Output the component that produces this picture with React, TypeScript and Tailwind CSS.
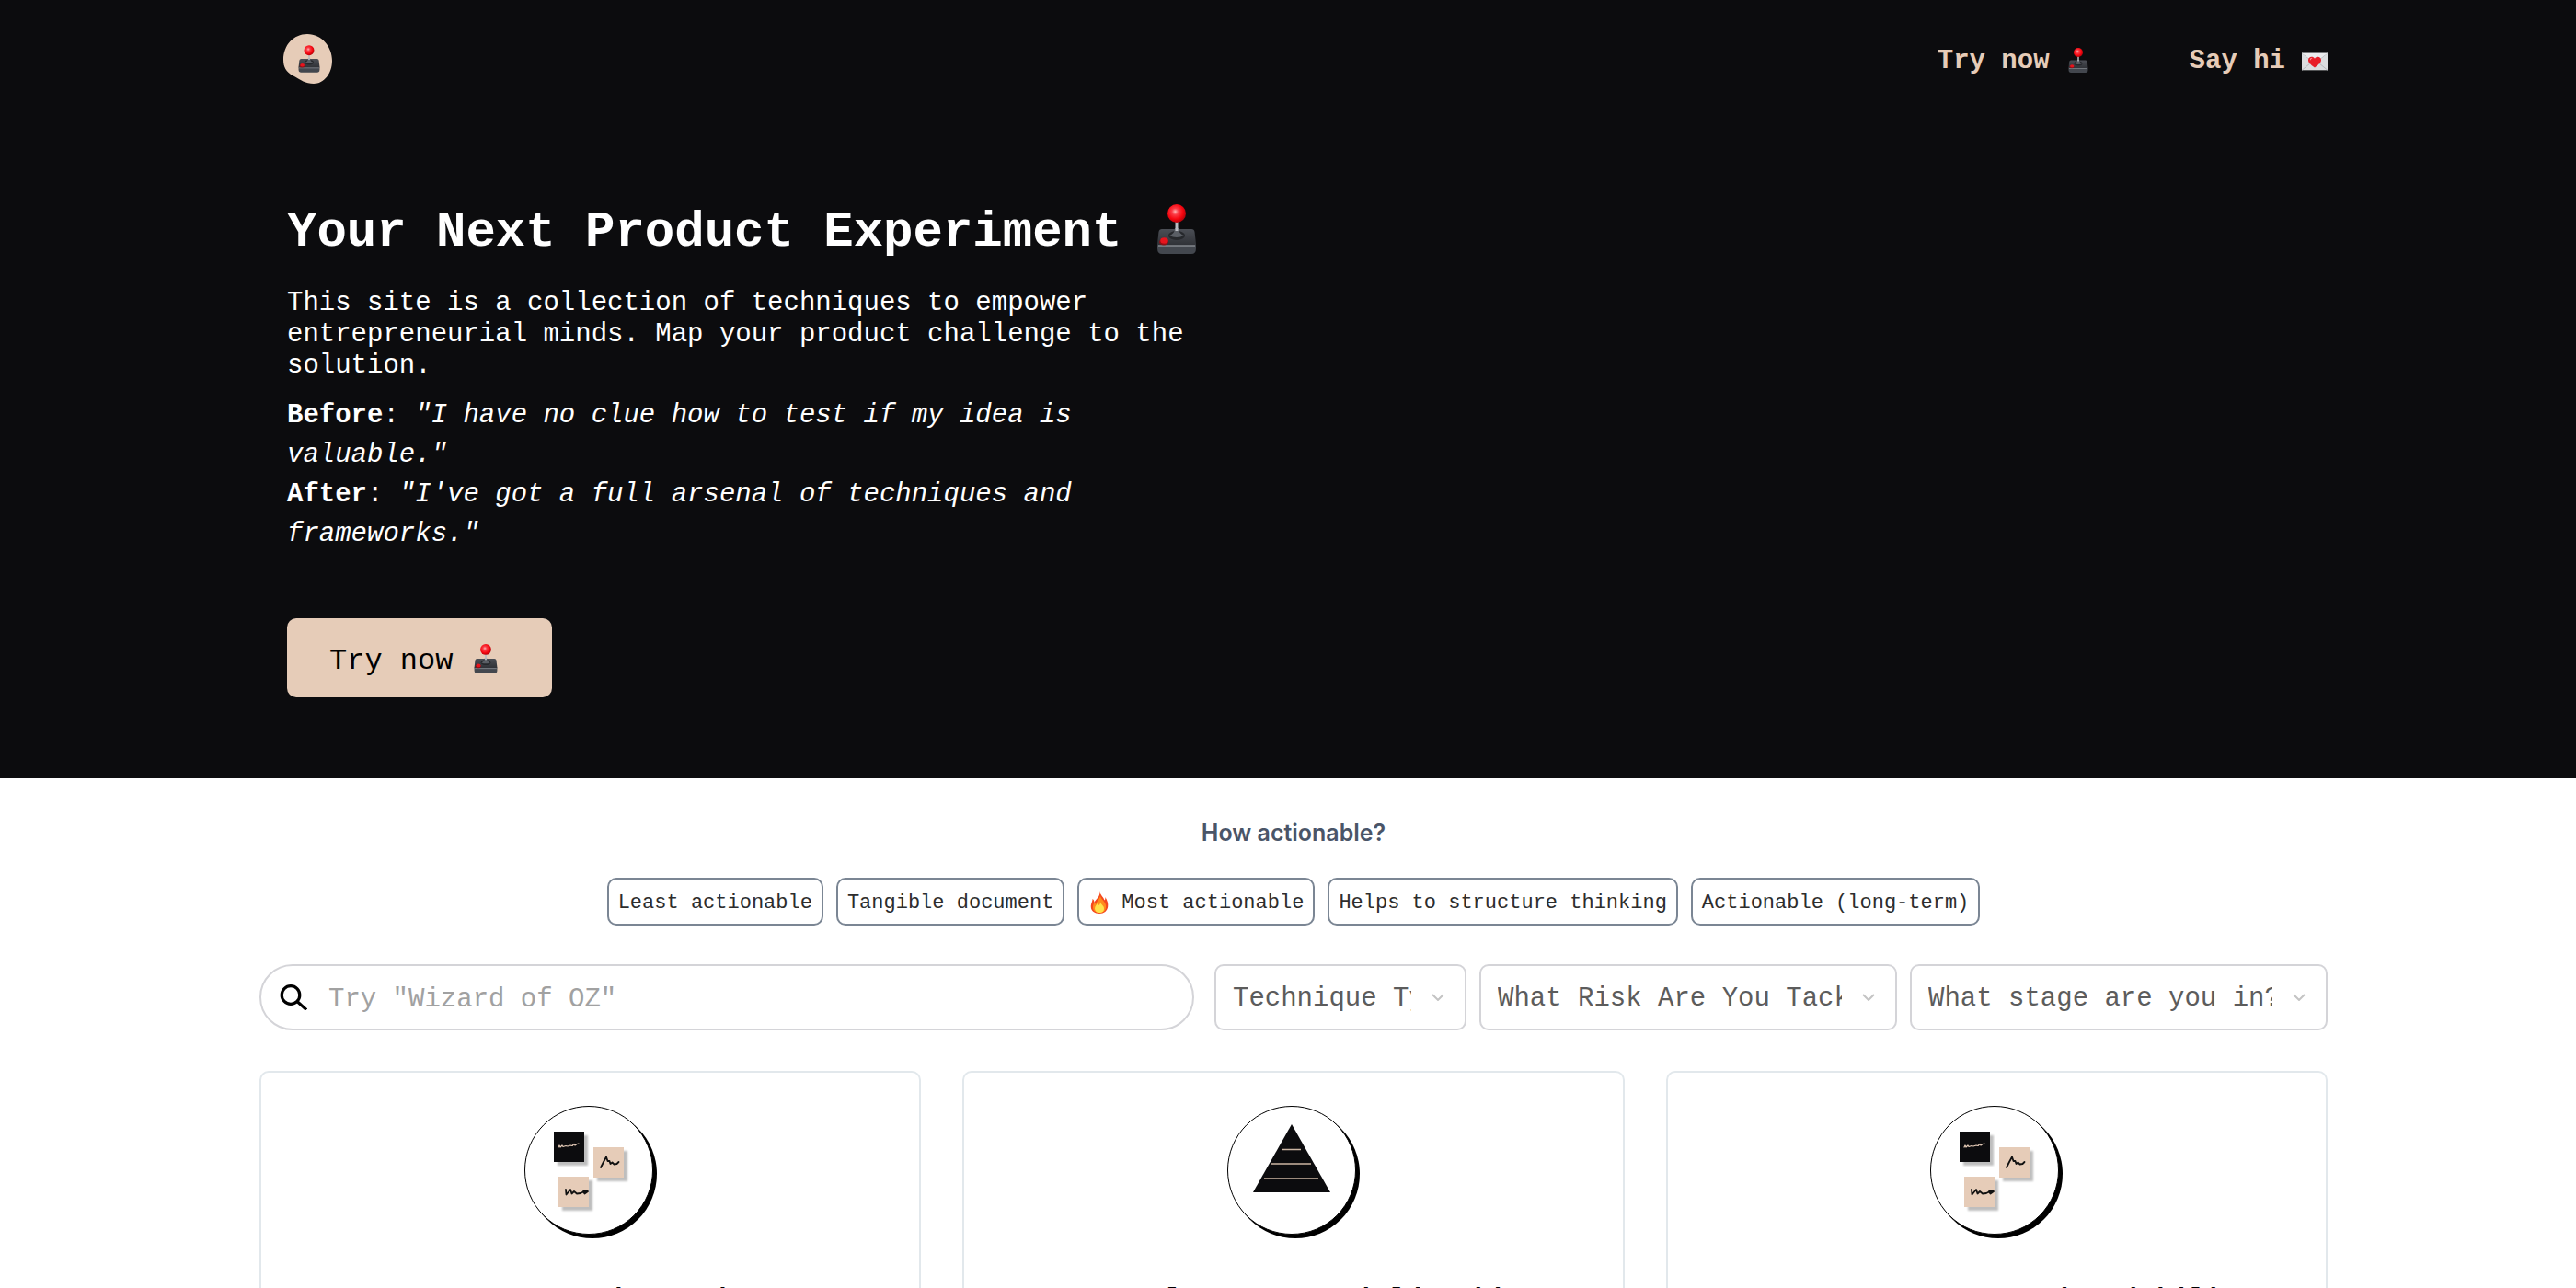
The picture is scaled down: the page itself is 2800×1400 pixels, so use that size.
import React from 'react';
import { clsx } from 'clsx';

const TAGS = [
  { label: 'Least actionable' },
  { label: 'Tangible document' },
  { label: 'Most actionable', hot: true },
  { label: 'Helps to structure thinking' },
  { label: 'Actionable (long-term)' },
];

const FILTERS = [
  { id: 'technique', label: 'Technique Type', width: 'w-[274px]' },
  { id: 'risk', label: 'What Risk Are You Tackling?', width: 'w-[454px]' },
  { id: 'stage', label: 'What stage are you in?', width: 'w-[454px]' },
];

const CARDS = [
  { title: 'Momentum Idea Bank', art: 'notes' },
  { title: 'Unusual Ventures Field Guide', art: 'pyramid' },
  { title: 'How Ventures Prove The Viability', art: 'notes' },
];

function Joystick({ className }: { className?: string }) {
  return (
    <svg viewBox="0 0 44 54" className={className} aria-hidden="true">
      <defs>
        <radialGradient id="ball" cx="0.42" cy="0.4" r="0.6">
          <stop offset="0" stopColor="#ffb3b3" />
          <stop offset="0.3" stopColor="#fb3a44" />
          <stop offset="0.7" stopColor="#f5060f" />
          <stop offset="1" stopColor="#b8020a" />
        </radialGradient>
        <linearGradient id="plate" x1="0" y1="0" x2="0" y2="1">
          <stop offset="0" stopColor="#4b4e55" />
          <stop offset="1" stopColor="#2f3136" />
        </linearGradient>
      </defs>
      <path d="M1 43h42v5q0 6-5 6H6q-5 0-5-6z" fill="#43474e" />
      <path d="M6 27h32q3 0 3.500 3L43 43q0 2-2 2H3q-2 0-2-2l1.500-13Q3 27 6 27z" fill="url(#plate)" />
      <path d="M2 45h40" stroke="#84888f" strokeWidth="1.500" />
      <ellipse cx="22" cy="34" rx="9" ry="5" fill="#26282c" />
      <path d="M14 34q6-2 6-8h4q0 6 6 8-8 4-16 0z" fill="#5a5e65" />
      <path d="M22 17v12" stroke="#b9bcc2" strokeWidth="3" />
      <ellipse cx="8" cy="41" rx="5" ry="3.500" fill="#8e1016" />
      <ellipse cx="8.500" cy="39.500" rx="4.200" ry="3.200" fill="#e8141d" />
      <circle cx="22" cy="10" r="10" fill="url(#ball)" />
    </svg>
  );
}

function LoveLetter({ className }: { className?: string }) {
  return (
    <svg viewBox="0 0 30 20" className={className} aria-hidden="true">
      <rect width="30" height="20" fill="#dcdddf" />
      <path d="M0 20l11-9M30 20l-11-9M0 0l15 12L30 0" fill="none" stroke="#b4b6ba" strokeWidth="1" />
      <path d="M0 0h30L15 11z" fill="#ececee" />
      <path d="M15 17C10 13 7.500 11 7.500 8c0-4 5.500-5 7.500-1.500C17 3 22.500 4 22.500 8c0 3-2.500 5-7.500 9z" fill="#e81e28" />
      <path d="M10 8q0-2 2-2" fill="none" stroke="#ff8288" strokeWidth="1.200" />
    </svg>
  );
}

function Fire({ className }: { className?: string }) {
  return (
    <svg viewBox="0 0 20 24" className={className} aria-hidden="true">
      <path
        d="M10.500 0c.5 4 4 6 5 9.500 1-1 1-2 .8-3.500 2.500 4 3.400 7 2.900 10.500-.6 4.500-4 7.500-9.200 7.500S1 21 .8 17C.6 13 2.500 11.500 2.500 8c1.500 1 2 2.500 2 4C6 8 11 6 10.500 0z"
        fill="#f4481e"
      />
      <path d="M11 4c0 4 5 6 6 11 .7 5-2 8-7 8s-7.500-3-7-7c.3-2 1-3 1.500-4l2 2c0-4 4-5 4.500-10z" fill="#ff8a1c" />
      <path d="M11 11c0 3 4 4 4 7.500S13 23 10 23s-5-2-5-4.500S7 15 7.500 13l2 2c1-1 1.500-2 1.500-4z" fill="#ffe14a" />
    </svg>
  );
}

function Logo() {
  return (
    <a href="#" aria-label="Home" className="relative block h-[54px] w-[54px]">
      <svg viewBox="0 0 54 54" className="h-full w-full" aria-hidden="true">
        <path d="M26 0c16 0 27 14 27 29 0 14-9 25-20 25-9 0-14-4-23-9C3 41 0 36 0 28 0 12 11 0 26 0z" fill="#e6ccb8" />
      </svg>
      <Joystick className="absolute left-4 top-3 h-[30px] w-6" />
    </a>
  );
}

function Disc({ children }: { children: React.ReactNode }) {
  return (
    <svg viewBox="0 0 144 144" className="h-36 w-36" aria-hidden="true">
      <circle cx="74" cy="74" r="70" fill="#000" />
      <circle cx="70" cy="70" r="69.500" fill="#fff" stroke="#000" />
      {children}
    </svg>
  );
}

function NotesArt() {
  return (
    <Disc>
      <defs>
        <filter id="soft" x="-20%" y="-20%" width="150%" height="150%">
          <feGaussianBlur stdDeviation="1.200" />
        </filter>
      </defs>
      <g fill="#000" opacity="0.25" filter="url(#soft)">
        <rect x="36" y="32" width="33" height="33" />
        <rect x="79" y="49" width="33" height="33" />
        <rect x="41" y="81" width="33" height="33" />
      </g>
      <rect x="32" y="28" width="33" height="33" fill="#0c0c0e" />
      <rect x="75" y="45" width="33" height="33" fill="#e6ccb8" />
      <rect x="37" y="77" width="33" height="33" fill="#e6ccb8" />
      <g fill="none" strokeLinecap="round" strokeLinejoin="round">
        <path d="M37 45l1-2 1 2 2-2 1 1.500 3-1 2 .5 3-1 2 .5 2-2 1 1.500 2-1.500 2-.5" stroke="#e6ccb8" strokeWidth="1.200" />
        <path d="M83 67l3-6 3-5.500 1.500 4.500 2 0 1 3 2-1.500 2 2 3-.5 2-2" stroke="#111" strokeWidth="1.800" />
        <path d="M45 91l.5 5.500L50 91l1.500 4.500L54 93l3 2.500 4-.5 3-1.500 1.500 2L69 93l-5 0" stroke="#111" strokeWidth="1.800" />
      </g>
    </Disc>
  );
}

function PyramidArt() {
  return (
    <Disc>
      <path d="M70 20l42 74H28z" fill="#0c0c0e" />
      <path d="M59 47.500h21M48 63h43M40 79h59" stroke="#cbb5a3" strokeWidth="1.500" />
    </Disc>
  );
}

export default function App() {
  return (
    <div className="h-screen overflow-hidden bg-white font-['Liberation_Mono',monospace]">
      <div className="bg-[#0c0c0e] pb-[88px] pl-[312px] pr-[270px] text-white">
        <header className="-ml-1 flex items-center justify-between pt-[37px]">
          <Logo />
          <nav className="mt-1.5 flex items-center gap-[110px] text-[29px] font-bold leading-[34px] text-[#e6ccb8]">
            <a href="#try" className="flex items-center gap-[20px]">
              Try now
              <Joystick className="mb-1 h-[29px] w-[22px]" />
            </a>
            <a href="#hi" className="flex items-center gap-[18px]">
              Say hi
              <LoveLetter className="h-5 w-7" />
            </a>
          </nav>
        </header>

        <section className="max-w-[1000px] pt-[131px]">
          <h1 className="flex items-center gap-[38px] text-[54px] font-bold leading-[62px]">
            Your Next Product Experiment
            <Joystick className="mb-2 h-[54px] w-11" />
          </h1>
          <p className="mt-[29px] text-[29px] leading-[34px]">
            This site is a collection of techniques to empower entrepreneurial minds. Map your product challenge to the
            solution.
          </p>
          <div className="mt-[15px] max-w-[900px] text-[29px] leading-[43px]">
            <p>
              <b>Before</b>: <i>"I have no clue how to test if my idea is valuable."</i>
            </p>
            <p>
              <b>After</b>: <i>"I've got a full arsenal of techniques and frameworks."</i>
            </p>
          </div>
          <button
            type="button"
            className="mt-[70px] flex h-[86px] w-72 items-center gap-[23px] rounded-[10px] bg-[#e6ccb8] pl-[46px] pt-2 text-[32px] text-black"
          >
            Try now
            <Joystick className="mb-1.5 h-8 w-[26px]" />
          </button>
        </section>
      </div>

      <main className="pl-[282px] pr-[270px] pt-11">
        <h2 className="text-center font-['Inter',sans-serif] text-[25px] font-semibold leading-[30px] text-[#4a5568]">
          How actionable?
        </h2>

        <div className="mt-[34px] flex justify-center gap-[14px]">
          {TAGS.map((tag) => (
            <button
              key={tag.label}
              type="button"
              className="flex h-[52px] items-center gap-[14px] rounded-[10px] border-2 border-[#7b8694] px-[10px] pt-0.5 text-[22px] text-[#2d2d2d]"
            >
              {tag.hot && <Fire className="ml-0.5 h-6 w-5" />}
              {tag.label}
            </button>
          ))}
        </div>

        <div className="mt-[42px] flex gap-[14px]">
          <label className="mr-2 flex h-[72px] min-w-0 flex-1 items-center gap-[23px] rounded-full border-2 border-[#d4d4d8] pl-5">
            <svg viewBox="0 0 30 28" className="h-7 w-[30px]" fill="none" stroke="#000" strokeWidth="3.200" aria-hidden="true">
              <circle cx="12" cy="11.500" r="9.800" />
              <path d="M19 18.500l10 9" />
            </svg>
            <input
              type="text"
              aria-label="Search techniques"
              placeholder={'Try "Wizard of OZ"'}
              className="min-w-0 flex-1 bg-transparent pt-1.5 text-[29px] outline-none placeholder:text-[#a1a1a1]"
            />
          </label>
          {FILTERS.map((filter) => (
            <div key={filter.id} className={clsx('relative shrink-0', filter.width)}>
              <select
                aria-label={filter.label}
                className="h-[72px] w-full appearance-none rounded-[10px] border-2 border-[#d4d4d8] bg-white pl-[18px] pr-[58px] pt-1 text-[29px] text-[#5c5c5c]"
              >
                <option>{filter.label}</option>
              </select>
              <svg
                viewBox="0 0 14 8"
                className="pointer-events-none absolute right-6 top-8 h-2 w-[14px]"
                fill="none"
                stroke="#c4c4c4"
                strokeWidth="2"
                aria-hidden="true"
              >
                <path d="M1 1l6 6 6-6" />
              </svg>
            </div>
          ))}
        </div>

        <div className="mt-11 grid grid-cols-3 gap-[45px]">
          {CARDS.map((card) => (
            <article
              key={card.title}
              className="flex flex-col items-center rounded-[10px] border-2 border-[#e2e8ec] px-8 pb-10 pt-9"
            >
              {card.art === 'notes' ? <NotesArt /> : <PyramidArt />}
              <h3 className="mt-[46px] text-center text-[29px] font-bold leading-[44px]">{card.title}</h3>
            </article>
          ))}
        </div>
      </main>
    </div>
  );
}
